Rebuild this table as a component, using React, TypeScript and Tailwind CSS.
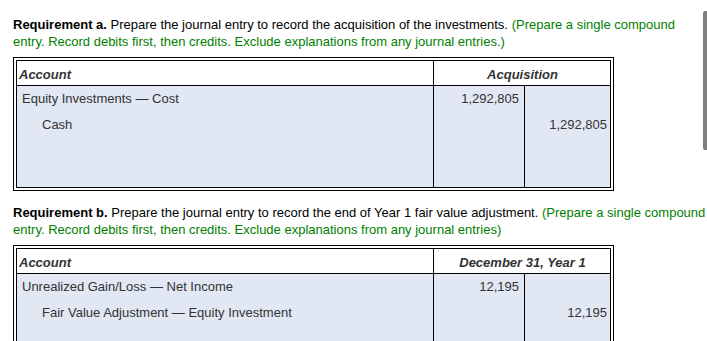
const requirements = [
  {
    label: "Requirement a.",
    text: "Prepare the journal entry to record the acquisition of the investments.",
    note: "(Prepare a single compound entry. Record debits first, then credits. Exclude explanations from any journal entries.)",
    heading: "Acquisition",
    rows: [
      { account: "Equity Investments \u2014 Cost", debit: "1,292,805", credit: "" },
      { account: "Cash", debit: "", credit: "1,292,805", indent: true },
    ],
  },
  {
    label: "Requirement b.",
    text: "Prepare the journal entry to record the end of Year 1 fair value adjustment.",
    note: "(Prepare a single compound entry. Record debits first, then credits. Exclude explanations from any journal entries)",
    heading: "December 31, Year 1",
    rows: [
      { account: "Unrealized Gain/Loss \u2014 Net Income", debit: "12,195", credit: "" },
      { account: "Fair Value Adjustment \u2014 Equity Investment", debit: "", credit: "12,195", indent: true },
    ],
  },
];

function JournalTable({ heading, rows }: { heading: string; rows: { account: string; debit: string; credit: string; indent?: boolean }[] }) {
  return (
    <div className="w-[601px] border border-black bg-white p-[2px]">
      <div className="border border-black text-[13px] text-[#333]">
        {/* Header */}
        <div className="grid h-[25px] grid-cols-[416px_178px] border-b border-black">
          <div className="flex items-end pb-[1px] pl-[2px] font-bold italic">Account</div>
          <div className="flex items-end justify-center border-l border-black pb-[1px] font-bold italic">{heading}</div>
        </div>
        {/* Body */}
        <div className="grid h-[101px] grid-cols-[416px_91px_87px] bg-[#e1e7f3]">
          <div className="flex flex-col">
            {rows.map((r) => (
              <div key={r.account} className={`flex h-[26px] items-center ${r.indent ? "pl-[25px]" : "pl-[5px]"}`}>
                {r.account}
              </div>
            ))}
          </div>
          <div className="flex flex-col border-l border-black">
            {rows.map((r) => (
              <div key={r.account} className="flex h-[26px] items-center justify-end pr-[5px]">
                {r.debit}
              </div>
            ))}
          </div>
          <div className="flex flex-col border-l border-black">
            {rows.map((r) => (
              <div key={r.account} className="flex h-[26px] items-center justify-end pr-[4px]">
                {r.credit}
              </div>
            ))}
          </div>
        </div>
      </div>
    </div>
  );
}

export default function App() {
  return (
    <div className="relative h-[341px] w-[707px] overflow-hidden bg-white pl-[13px] pt-[16px]" style={{ fontFamily: '"Liberation Sans", Arial, sans-serif' }}>
      {requirements.map((req, i) => (
        <div key={req.label} className={i > 0 ? "mt-[13px]" : ""}>
          <p className="text-[13px] leading-[17px] text-black">
            <span className="font-bold">{req.label}</span> {req.text}{" "}
            <span className="text-[#008000]">{req.note}</span>
          </p>
          <div className="mt-[7px]">
            <JournalTable heading={req.heading} rows={req.rows} />
          </div>
        </div>
      ))}

      {/* scrollbar */}
      <div className="absolute right-0 top-[11px] h-[139px] w-[4px] rounded-l-[2px] bg-[#7f7f7f]" />
    </div>
  );
}
